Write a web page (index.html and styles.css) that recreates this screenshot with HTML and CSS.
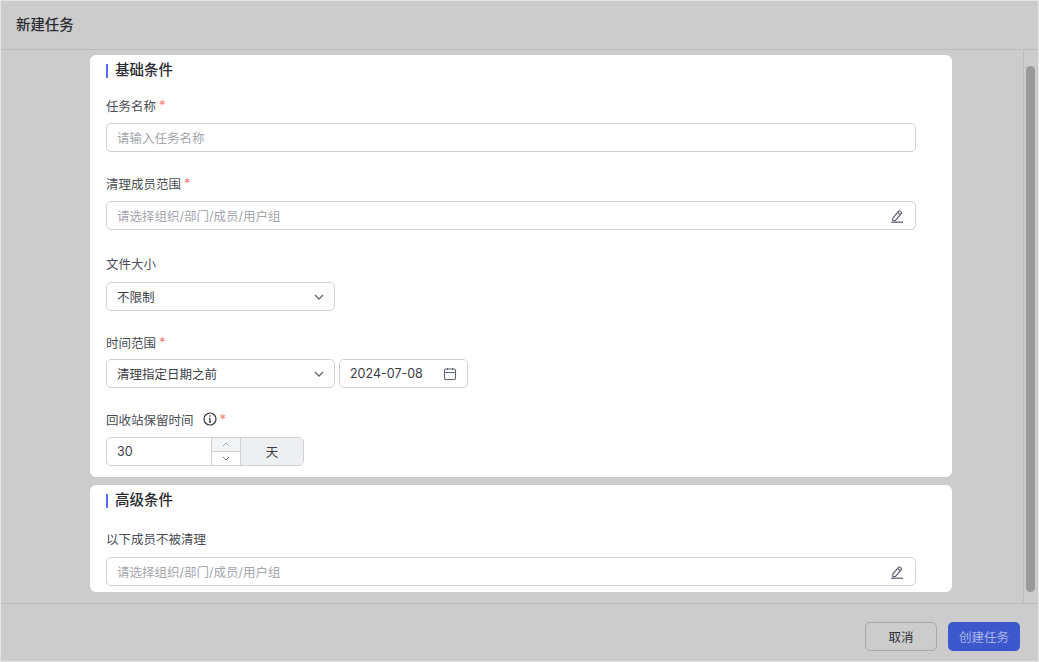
FILE: index.html
```html
<!DOCTYPE html>
<html lang="zh-CN">
<head>
<meta charset="utf-8">
<title>新建任务</title>
<link rel="stylesheet" href="styles.css">
</head>
<body>
<div class="dialog">
  <header class="head">新建任务</header>
  <div class="middle">
    <main class="content">
      <section class="card card-basic">
        <h2 class="title">基础条件</h2>
        <div class="field f-name">
          <label class="label">任务名称<span class="req">*</span></label>
          <div class="box wide"><span class="ph">请输入任务名称</span></div>
        </div>
        <div class="field f-scope">
          <label class="label">清理成员范围<span class="req">*</span></label>
          <div class="box wide"><span class="ph">请选择组织/部门/成员/用户组</span>
            <svg class="edit" viewBox="0 0 14 14" width="14" height="14"><path d="M2.8 9.2 8.6 2.2a1 1 0 0 1 1.4-.1l1.2 1a1 1 0 0 1 .1 1.4L5.5 11.3l-2.7.3z M7.6 3.4l2.7 2.3" fill="none" stroke="#5f6470" stroke-width="1.2" stroke-linejoin="round"/><path d="M1.2 13.2h11.8" stroke="#5f6470" stroke-width="1.3"/></svg>
          </div>
        </div>
        <div class="field f-size">
          <label class="label">文件大小</label>
          <div class="box select"><span>不限制</span>
            <svg class="chev" viewBox="0 0 10 6" width="10" height="6"><path d="M1 1l4 4 4-4" fill="none" stroke="#5f6470" stroke-width="1.3"/></svg>
          </div>
        </div>
        <div class="field f-time">
          <label class="label">时间范围<span class="req">*</span></label>
          <div class="row">
            <div class="box select"><span>清理指定日期之前</span>
              <svg class="chev" viewBox="0 0 10 6" width="10" height="6"><path d="M1 1l4 4 4-4" fill="none" stroke="#5f6470" stroke-width="1.3"/></svg>
            </div>
            <div class="box date"><span class="mono">2024-07-08</span>
              <svg viewBox="0 0 14 14" width="14" height="14"><rect x="1.5" y="2" width="11" height="10.5" rx="1.2" fill="none" stroke="#5f6470" stroke-width="1.1"/><path d="M1.5 5.5h11M4.5 1v2M9.5 1v2" stroke="#5f6470" stroke-width="1.1"/></svg>
            </div>
          </div>
        </div>
        <div class="field f-keep">
          <label class="label">回收站保留时间
            <svg class="info" viewBox="0 0 14 14" width="14" height="14"><circle cx="7" cy="7" r="6" fill="none" stroke="#33363d" stroke-width="1.2"/><path d="M7 6.2v4M6 6.4h1M6 10.2h2" stroke="#33363d" stroke-width="1.2"/><circle cx="7" cy="4" r=".8" fill="#33363d"/></svg><span class="req">*</span></label>
          <div class="number">
            <span class="num">30</span>
            <div class="steps">
              <span class="step"><svg viewBox="0 0 8 5" width="8" height="5"><path d="M1 4l3-3 3 3" fill="none" stroke="#a6a9b0" stroke-width="1"/></svg></span>
              <span class="step"><svg viewBox="0 0 8 5" width="8" height="5"><path d="M1 1l3 3 3-3" fill="none" stroke="#6a6e77" stroke-width="1"/></svg></span>
            </div>
            <span class="unit">天</span>
          </div>
        </div>
      </section>
      <section class="card card-adv">
        <h2 class="title">高级条件</h2>
        <div class="field f-exclude">
          <label class="label">以下成员不被清理</label>
          <div class="box wide"><span class="ph">请选择组织/部门/成员/用户组</span>
            <svg class="edit" viewBox="0 0 14 14" width="14" height="14"><path d="M2.8 9.2 8.6 2.2a1 1 0 0 1 1.4-.1l1.2 1a1 1 0 0 1 .1 1.4L5.5 11.3l-2.7.3z M7.6 3.4l2.7 2.3" fill="none" stroke="#5f6470" stroke-width="1.2" stroke-linejoin="round"/><path d="M1.2 13.2h11.8" stroke="#5f6470" stroke-width="1.3"/></svg>
          </div>
        </div>
      </section>
    </main>
    <div class="track"><div class="thumb"></div></div>
  </div>
  <footer class="foot">
    <button class="btn cancel">取消</button>
    <button class="btn primary">创建任务</button>
  </footer>
</div>
</body>
</html>
```

FILE: styles.css
```css
* { box-sizing: border-box; }
html, body { margin: 0; height: 100%; }
body {
  width: 1039px;
  height: 662px;
  overflow: hidden;
  background: #e6e6e6;
  padding: 1px 1px 1px 1px;
  font-family: Inter, "Noto Sans CJK SC", sans-serif;
  font-size: 12.5px;
  color: #33363d;
}
.dialog {
  width: 1037px;
  height: 660px;
  display: flex;
  flex-direction: column;
  background: #cccccc;
}
.head {
  height: 49px;
  flex: none;
  padding: 0 15px 3px;
  display: flex;
  align-items: center;
  font-size: 14.4px;
  font-weight: 500;
  color: #2a2c31;
  border-bottom: 1px solid #bcbcbc;
}
.middle { flex: 1; display: flex; min-height: 0; }
.content {
  flex: 1;
  padding: 5px 71px 0 89px;
  display: flex;
  flex-direction: column;
  gap: 8px;
}
.track {
  width: 15px;
  flex: none;
  border-left: 1px solid #bcbcbc;
  padding: 16px 2px 0 2px;
}
.thumb { width: 9px; height: 526px; border-radius: 5px; background: #999999; }
.card {
  width: 862px;
  background: #ffffff;
  border-radius: 6px;
  padding: 0 16px;
}
.card-basic { height: 422px; }
.card-adv { height: 107px; }
.title {
  margin: 0;
  height: 28px;
  padding-bottom: 2px;
  display: flex;
  align-items: center;
  font-size: 14.5px;
  font-weight: 500;
  color: #2a2c31;
}
.title::before {
  content: "";
  width: 2px;
  height: 14px;
  margin: 6px 7px 0 0;
  background: #4f6ef2;
}
.field { display: flex; flex-direction: column; }
.label {
  height: 18px;
  display: flex;
  align-items: center;
  font-size: 12.5px;
  color: #4a4d55;
  margin-bottom: 9px;
}
.req { color: #f0807a; margin-left: 3px; font-size: 13px; }
.f-name { margin-top: 13px; }
.f-scope { margin-top: 22px; }
.f-size { margin-top: 24px; }
.f-size .label { margin-bottom: 10px; }
.f-time { margin-top: 22px; }
.f-time .label { margin-bottom: 8px; }
.f-keep { margin-top: 22px; }
.f-exclude { margin-top: 16px; }
.f-exclude .label { margin-bottom: 10px; }
.box {
  height: 29px;
  border: 1px solid #cfd1d6;
  border-radius: 5px;
  padding: 0 10px;
  display: flex;
  align-items: center;
  justify-content: space-between;
  background: #fff;
  color: #3a3d44;
}
.wide { width: 810px; }
.select { width: 229px; }
.date { width: 129px; padding-right: 10px; }
.mono { font-size: 12.5px; }
.ph { color: #a3a6ad; }
.edit { margin-right: 1px; }
.row { display: flex; gap: 4px; }
.info { margin: 0 0 0 9px; }
.number {
  width: 198px;
  height: 29px;
  border: 1px solid #cfd1d6;
  border-radius: 5px;
  display: flex;
  overflow: hidden;
  color: #3a3d44;
}
.num { width: 104px; padding-left: 10px; display: flex; align-items: center; font-size: 12.5px; }
.steps { width: 29px; border-left: 1px solid #cfd1d6; display: flex; flex-direction: column; }
.step { flex: 1; display: flex; align-items: center; justify-content: center; }
.step:first-child { background: #f3f4f5; border-bottom: 1px solid #cfd1d6; }
.unit {
  flex: 1;
  display: flex;
  align-items: center;
  justify-content: center;
  background: #eeeff1;
  border-left: 1px solid #cfd1d6;
}
.foot {
  height: 58px;
  flex: none;
  border-top: 1px solid #bcbcbc;
  display: flex;
  justify-content: flex-end;
  align-items: flex-start;
  gap: 11px;
  padding: 18px 18px 0 0;
}
.btn {
  width: 72px;
  height: 29px;
  border-radius: 5px;
  font: inherit;
  font-size: 12.5px;
  padding: 0;
}
.cancel { background: transparent; border: 1px solid #a9a9a9; color: #2f3136; }
.primary { background: #3d57cc; border: 0; color: #a9b6e8; }
```
